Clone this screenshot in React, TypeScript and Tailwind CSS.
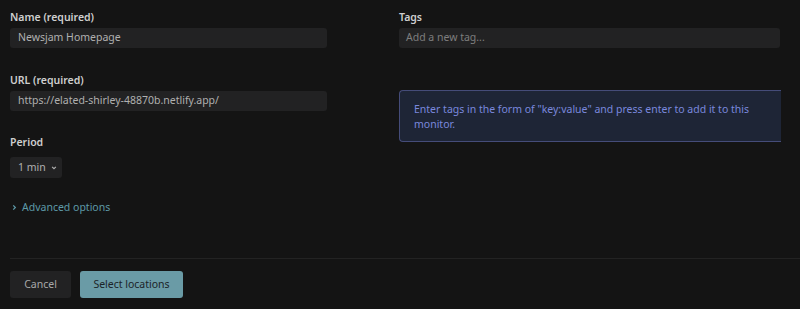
import React from "react";

const font = { fontFamily: '"Noto Sans", "Open Sans", sans-serif' };

function Label({ children, mb = "mb-[4px]" }: { children: React.ReactNode; mb?: string }) {
  return (
    <label className={`text-[10.5px] font-semibold leading-[14px] text-[#cfcfcf] ${mb}`}>
      {children}
    </label>
  );
}

function Field({ label, value }: { label: string; value: string }) {
  return (
    <div className="flex flex-col">
      <Label>{label}</Label>
      <div className="h-[20px] w-[317px] rounded-[3px] bg-[#222223] px-[8px] flex items-center text-[10.5px] text-[#b0b0b0]">
        {value}
      </div>
    </div>
  );
}

export default function App() {
  return (
    <div className="w-[800px] h-[309px] bg-[#141414] overflow-hidden" style={font}>
      <div className="flex pl-[10px] pt-[10px] h-[258px]">
        {/* Left column */}
        <div className="w-[317px] flex flex-col">
          <Field label="Name (required)" value="Newsjam Homepage" />
          <div className="mt-[25px]">
            <Field label="URL (required)" value="https://elated-shirley-48870b.netlify.app/" />
          </div>
          <div className="mt-[24px] flex flex-col">
            <Label mb="mb-[8px]">Period</Label>
            <div className="h-[21px] w-[52px] rounded-[3px] bg-[#222223] flex items-center pl-[8px] gap-[5px] text-[10.5px] text-[#b0b0b0]">
              1 min
              <svg className="w-[6px] h-[6px]" viewBox="0 0 8 8" fill="none" stroke="currentColor" strokeWidth="1.5">
                <path d="M1.5 2.5l2.5 2.5L6.5 2.5" />
              </svg>
            </div>
          </div>
          <div className="mt-[22px] flex items-center gap-[5px] pl-[2px] text-[10.5px] leading-[15px] text-[#5e9aa8]">
            <svg className="w-[5px] h-[7px]" viewBox="0 0 6 8" fill="none" stroke="currentColor" strokeWidth="1.5">
              <path d="M1.5 1.5L4 4 1.5 6.5" />
            </svg>
            Advanced options
          </div>
        </div>

        {/* Right column */}
        <div className="ml-[72px] w-[382px] flex flex-col">
          <Label>Tags</Label>
          <div className="h-[20px] w-[381px] rounded-[3px] bg-[#222223] px-[7px] flex items-center text-[10.5px] text-[#7e7e7e]">
            Add a new tag...
          </div>
          <div className="mt-[42px] h-[52px] w-[382px] rounded-l-[4px] border border-r-0 border-[#454c79] bg-[#1e2536] px-[14px] pt-[11px] text-[10.5px] leading-[15px] text-[#7a88dd]">
            Enter tags in the form of "key:value" and press enter to add it to this monitor.
          </div>
        </div>
      </div>

      <div className="ml-[10px] h-px bg-[#232323]" />

      <div className="flex gap-[9px] pl-[10px] pt-[12px]">
        <button className="h-[27px] w-[61px] rounded-[3px] bg-[#222223] text-[10.5px] text-[#a8a8a8]">
          Cancel
        </button>
        <button className="h-[27px] w-[103px] rounded-[3px] bg-[#6a9ba6] text-[10.5px] text-[#1b2428]">
          Select locations
        </button>
      </div>
    </div>
  );
}
